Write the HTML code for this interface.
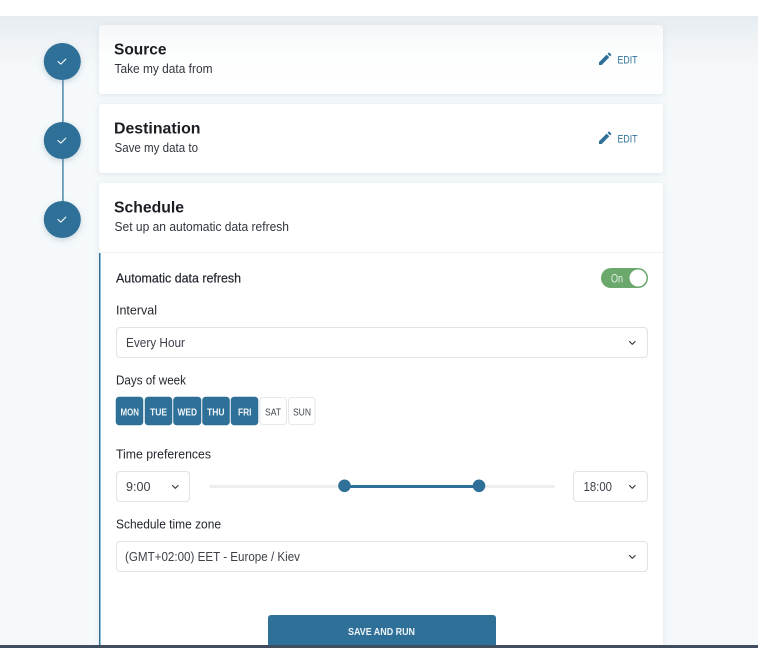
<!DOCTYPE html>
<html><head><meta charset="utf-8"><style>
html,body{margin:0;padding:0;width:758px;height:648px;overflow:hidden;background:#f5f9fb}
svg{display:block;position:absolute;left:0;top:0}
text{font-family:"Liberation Sans",sans-serif;fill:#2c3038}
.sub{font-size:12.6px;fill:#32363f}
.t{font-size:15.5px;font-weight:bold;fill:#1a1d24}
.l{font-size:12.6px;fill:#23272e}
.v{font-size:12.6px;fill:#3c4149}
.d{font-size:10.4px;fill:#fff;font-weight:bold;opacity:.92}
.e{font-size:10.8px;fill:#2f7098}
</style></head><body>
<svg width="758" height="648" viewBox="0 0 758 648" xmlns="http://www.w3.org/2000/svg">
<defs>
<linearGradient id="bg" x1="0" y1="0" x2="0" y2="1"><stop offset="0" stop-color="#e6ecf0"/><stop offset=".5" stop-color="#f0f4f7"/><stop offset="1" stop-color="#f5f9fb"/></linearGradient>
<linearGradient id="c1" x1="0" y1="0" x2="0" y2="1"><stop offset="0" stop-color="#f5f7f9"/><stop offset=".45" stop-color="#fdfefe"/><stop offset="1" stop-color="#fff"/></linearGradient>
<filter id="s" x="-5%" y="-20%" width="110%" height="140%"><feDropShadow dx="0" dy="1" stdDeviation="3" flood-color="#8aa0b0" flood-opacity=".22"/></filter>
<filter id="cs" x="-40%" y="-40%" width="180%" height="180%"><feDropShadow dx="0" dy="2" stdDeviation="3" flood-color="#5a7f98" flood-opacity=".3"/></filter>
<filter id="b" x="-2%" y="-2%" width="104%" height="104%"><feGaussianBlur stdDeviation=".35"/></filter>
</defs>
<rect width="758" height="648" fill="#f5f9fb"/>
<rect y="16" width="758" height="56" fill="url(#bg)"/>
<rect width="758" height="16" fill="#fff"/>

<g filter="url(#b)">
<rect x="62" y="75" width="1.800" height="135" fill="#6a9aba"/>
<g fill="#2f7098" filter="url(#cs)">
<circle cx="62.300" cy="61.500" r="18.500"/><circle cx="62.300" cy="140.500" r="18.500"/><circle cx="62.300" cy="219.500" r="18.500"/>
</g>
<g fill="none" stroke="#fff" stroke-width="1.100" stroke-linecap="round" stroke-linejoin="round">
<path d="M58 61.500l2.800 2.600 5-5"/><path d="M58 140.500l2.800 2.600 5-5"/><path d="M58 219.500l2.800 2.600 5-5"/>
</g>

<rect x="99" y="25" width="564" height="69" rx="3" fill="url(#c1)" filter="url(#s)"/>
<rect x="99" y="104" width="564" height="69" rx="3" fill="#fff" filter="url(#s)"/>
<path d="M99 186a3 3 0 0 1 3-3h558a3 3 0 0 1 3 3v470H99z" fill="#fff" filter="url(#s)"/>
<rect x="99" y="252" width="564" height="1" fill="#f0f3f5"/>
<rect x="99" y="253" width="1.500" height="395" fill="#2f7098"/>

<text class="t" x="114" y="54.500" textLength="52.500" lengthAdjust="spacingAndGlyphs">Source</text>
<text class="sub" x="114.500" y="73" textLength="98" lengthAdjust="spacingAndGlyphs">Take my data from</text>
<text class="t" x="114" y="133.500" textLength="86.500" lengthAdjust="spacingAndGlyphs">Destination</text>
<text class="sub" x="114.500" y="152" textLength="83.500" lengthAdjust="spacingAndGlyphs">Save my data to</text>
<text class="t" x="114" y="212.500" textLength="70" lengthAdjust="spacingAndGlyphs">Schedule</text>
<text class="sub" x="114.500" y="231" textLength="174.500" lengthAdjust="spacingAndGlyphs">Set up an automatic data refresh</text>

<g fill="#2f7098">
<path d="M599 65v-2.800l7.600-7.600 2.700 2.700-7.600 7.700zM607.500 53.800l1-1a.7.7 0 0 1 1 0l1.600 1.600a.7.7 0 0 1 0 1l-1 1z"/>
<path d="M599 144v-2.800l7.600-7.600 2.700 2.700-7.600 7.700zM607.500 132.800l1-1a.7.7 0 0 1 1 0l1.600 1.600a.7.7 0 0 1 0 1l-1 1z"/>
</g>
<text class="e" x="617.500" y="63.500" textLength="20" lengthAdjust="spacingAndGlyphs">EDIT</text>
<text class="e" x="617.500" y="142.500" textLength="20" lengthAdjust="spacingAndGlyphs">EDIT</text>

<text class="l" x="116" y="282.500" textLength="125" lengthAdjust="spacingAndGlyphs" stroke="#23272e" stroke-width=".2">Automatic data refresh</text>
<rect x="601" y="268" width="47" height="20" rx="10" fill="#6aa86c"/>
<circle cx="638" cy="278" r="8.500" fill="#fff"/>
<text x="611" y="282.500" font-size="12" style="fill:#e8f2e8" textLength="12" lengthAdjust="spacingAndGlyphs">On</text>

<text class="l" x="116" y="314.500" textLength="41" lengthAdjust="spacingAndGlyphs">Interval</text>
<rect x="116.500" y="327.500" width="531" height="30" rx="3.500" fill="#fff" stroke="#dde3e6"/>
<text class="v" x="126" y="347" textLength="59" lengthAdjust="spacingAndGlyphs">Every Hour</text>

<text class="l" x="116" y="384.500" textLength="70" lengthAdjust="spacingAndGlyphs">Days of week</text>
<g fill="#2f7098" stroke="#2a6a90" stroke-width=".5">
<rect x="116" y="397" width="27" height="28" rx="3"/>
<rect x="145" y="397" width="27" height="28" rx="3"/>
<rect x="173.500" y="397" width="27.500" height="28" rx="3"/>
<rect x="202.500" y="397" width="27" height="28" rx="3"/>
<rect x="231" y="397" width="27" height="28" rx="3"/>
</g>
<g fill="#fff" stroke="#e3e9ec">
<rect x="260" y="397.500" width="26.500" height="27" rx="3"/>
<rect x="288.500" y="397.500" width="26.500" height="27" rx="3"/>
</g>
<text class="d" x="120.500" y="415.300" textLength="18.500" lengthAdjust="spacingAndGlyphs">MON</text>
<text class="d" x="150" y="415.300" textLength="17" lengthAdjust="spacingAndGlyphs">TUE</text>
<text class="d" x="177.500" y="415.300" textLength="19.500" lengthAdjust="spacingAndGlyphs">WED</text>
<text class="d" x="207" y="415.300" textLength="17.500" lengthAdjust="spacingAndGlyphs">THU</text>
<text class="d" x="238" y="415.300" textLength="13.500" lengthAdjust="spacingAndGlyphs">FRI</text>
<text class="d" x="265" y="415.300" textLength="16" lengthAdjust="spacingAndGlyphs" style="fill:#33383f;font-weight:normal">SAT</text>
<text class="d" x="293" y="415.300" textLength="18" lengthAdjust="spacingAndGlyphs" style="fill:#33383f;font-weight:normal">SUN</text>

<text class="l" x="116" y="458.500" textLength="95" lengthAdjust="spacingAndGlyphs">Time preferences</text>
<rect x="116.500" y="471.500" width="73" height="30" rx="3.500" fill="#fff" stroke="#dde3e6"/>
<text class="v" x="126" y="491" textLength="24.500" lengthAdjust="spacingAndGlyphs">9:00</text>
<rect x="209" y="485" width="346" height="3" rx="1.500" fill="#eceeef"/>
<rect x="345" y="485" width="134" height="3" fill="#2f7098"/>
<circle cx="344.500" cy="485.800" r="6.300" fill="#2f7098"/>
<circle cx="479" cy="485.800" r="6.300" fill="#2f7098"/>
<rect x="573.500" y="471.500" width="74" height="30" rx="3.500" fill="#fff" stroke="#dde3e6"/>
<text class="v" x="583.500" y="491" textLength="28.500" lengthAdjust="spacingAndGlyphs">18:00</text>

<text class="l" x="116" y="528.500" textLength="105" lengthAdjust="spacingAndGlyphs">Schedule time zone</text>
<rect x="116.500" y="541.500" width="531" height="30" rx="3.500" fill="#fff" stroke="#dde3e6"/>
<text class="v" x="125" y="561" textLength="175" lengthAdjust="spacingAndGlyphs">(GMT+02:00) EET - Europe / Kiev</text>

<g fill="none" stroke="#3a3f48" stroke-width="1.200" stroke-linecap="round" stroke-linejoin="round">
<path d="M629.500 341.500l2.800 2.800 2.800-2.800"/>
<path d="M172.500 485.500l2.800 2.800 2.800-2.800"/>
<path d="M629.500 485.500l2.800 2.800 2.800-2.800"/>
<path d="M629.500 555.500l2.800 2.800 2.800-2.800"/>
</g>

<rect x="268" y="615" width="228" height="32" rx="3" fill="#2f7098"/>
<text x="348" y="635" font-size="10" font-weight="bold" style="fill:#eef4f8" textLength="67" lengthAdjust="spacingAndGlyphs">SAVE AND RUN</text>
</g>
<rect y="645" width="758" height="3" fill="#3f4d5e"/>
</svg>
</body></html>
